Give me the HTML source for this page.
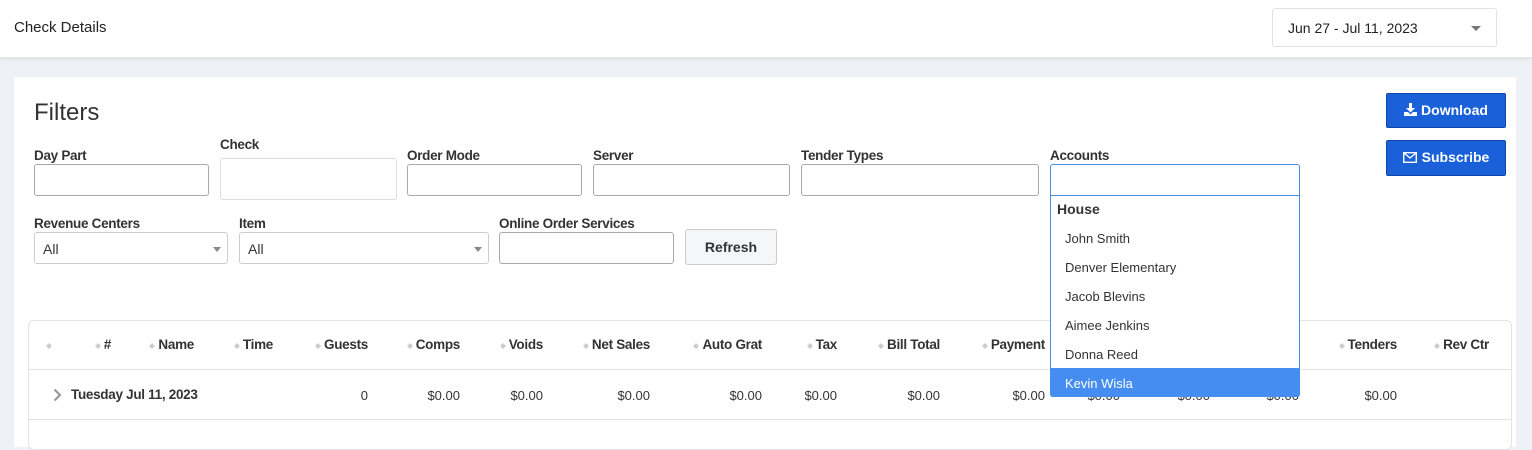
<!DOCTYPE html>
<html><head><style>
*{box-sizing:border-box;margin:0;padding:0}
body{width:1532px;height:437px;overflow:hidden;background:#eef1f5;font-family:"Liberation Sans",sans-serif;color:#222;position:relative}
.a{position:absolute}
.hdr{left:0;top:0;width:1532px;height:57px;background:#fff;box-shadow:0 2px 4px rgba(0,0,0,.08)}
.card{left:14px;top:77px;width:1502px;height:370px;background:#fff}
.lbl{font-size:13.5px;font-weight:bold;color:#333;letter-spacing:-.3px}
.inp{border:1px solid #aaa;border-radius:3px;background:#fff;height:32px}
.sel{border:1px solid #ccc;border-radius:3px;height:32px;font-size:14px;padding:8px 8px;color:#333}
.sel:after{content:"";position:absolute;right:6px;top:14px;border:4px solid transparent;border-top:5px solid #888}
.btn{background:#1a60d8;border:1px solid #1247a8;border-radius:2px;color:#fff;font-weight:bold;font-size:14px;text-align:center;line-height:33px}
.th{font-size:13.5px;font-weight:bold;color:#333;top:337px;text-align:right;letter-spacing:-.3px}
.td{font-size:13px;color:#333;top:388px;text-align:right}
.si{display:inline-block;width:6px;height:8px;margin-right:3px;vertical-align:0;position:relative}
.si:before{content:"";position:absolute;left:0;top:-1px;border:3px solid transparent;border-bottom:3px solid #ccc}
.si:after{content:"";position:absolute;left:0;top:5px;border:3px solid transparent;border-top:3px solid #ccc}
.it{left:1065px;font-size:13px;color:#333}
</style></head><body>
<div class="a hdr"></div>
<div class="a" style="left:14px;top:19px;font-size:15px;color:#222">Check Details</div>
<div class="a" style="left:1272px;top:8px;width:225px;height:39px;border:1px solid #e2e2e2;border-radius:3px;background:#fff"></div>
<div class="a" style="left:1288px;top:20px;font-size:14px;color:#222">Jun 27 - Jul 11, 2023</div>
<div class="a" style="left:1471px;top:26px;border:5px solid transparent;border-top:5px solid #777"></div>

<div class="a card"></div>
<div class="a" style="left:34px;top:99px;font-size:24px;color:#333">Filters</div>

<div class="a lbl" style="left:34px;top:148px">Day Part</div>
<div class="a inp" style="left:34px;top:164px;width:175px"></div>
<div class="a lbl" style="left:220px;top:137px">Check</div>
<div class="a inp" style="left:220px;top:158px;width:177px;height:42px;border-color:#ddd"></div>
<div class="a lbl" style="left:407px;top:148px">Order Mode</div>
<div class="a inp" style="left:407px;top:164px;width:175px"></div>
<div class="a lbl" style="left:593px;top:148px">Server</div>
<div class="a inp" style="left:593px;top:164px;width:197px"></div>
<div class="a lbl" style="left:801px;top:148px">Tender Types</div>
<div class="a inp" style="left:801px;top:164px;width:238px"></div>
<div class="a lbl" style="left:1050px;top:148px">Accounts</div>

<div class="a lbl" style="left:34px;top:216px">Revenue Centers</div>
<div class="a sel" style="left:34px;top:232px;width:194px">All</div>
<div class="a lbl" style="left:239px;top:216px">Item</div>
<div class="a sel" style="left:239px;top:232px;width:250px">All</div>
<div class="a lbl" style="left:499px;top:216px">Online Order Services</div>
<div class="a inp" style="left:499px;top:232px;width:175px"></div>
<div class="a" style="left:685px;top:229px;width:92px;height:36px;border:1px solid #ccc;border-radius:3px;background:#f4f6f8;font-size:14px;font-weight:bold;text-align:center;line-height:34px;color:#333">Refresh</div>

<div class="a btn" style="left:1386px;top:93px;width:120px;height:35px"><svg width="13" height="13" viewBox="0 0 13 13" style="vertical-align:-1px;margin-right:4px"><path d="M5 0h3v5h3l-4.5 4.5L2 5h3z M0 9h4l2.5 2.5L9 9h4v4H0z" fill="#fff"/></svg>Download</div>
<div class="a btn" style="left:1386px;top:140px;width:120px;height:36px"><svg width="14" height="11" viewBox="0 0 14 11" style="vertical-align:-1px;margin-right:5px"><rect x=".7" y=".7" width="12.6" height="9.6" fill="none" stroke="#fff" stroke-width="1.4"/><path d="M1 1l6 5 6-5" fill="none" stroke="#fff" stroke-width="1.4"/></svg>Subscribe</div>

<div class="a" style="left:28px;top:320px;width:1484px;height:130px;border:1px solid #e4e4e4;border-radius:6px;background:#fff"></div>
<div class="a" style="left:29px;top:369px;width:1482px;height:1px;background:#e4e4e4"></div>
<div class="a" style="left:29px;top:419px;width:1482px;height:1px;background:#e4e4e4"></div>
<div class="a th" style="left:46px"><span class="si"></span></div>
<div class="a th" style="right:1421px"><span class="si"></span>#</div>
<div class="a th" style="right:1338px"><span class="si"></span>Name</div>
<div class="a th" style="right:1259px"><span class="si"></span>Time</div>
<div class="a th" style="right:1164px"><span class="si"></span>Guests</div>
<div class="a th" style="right:1072px"><span class="si"></span>Comps</div>
<div class="a th" style="right:989px"><span class="si"></span>Voids</div>
<div class="a th" style="right:882px"><span class="si"></span>Net Sales</div>
<div class="a th" style="right:770px"><span class="si"></span>Auto Grat</div>
<div class="a th" style="right:695px"><span class="si"></span>Tax</div>
<div class="a th" style="right:592px"><span class="si"></span>Bill Total</div>
<div class="a th" style="right:487px"><span class="si"></span>Payment</div>
<div class="a th" style="right:135px"><span class="si"></span>Tenders</div>
<div class="a th" style="right:43px"><span class="si"></span>Rev Ctr</div>

<svg class="a" style="left:53px;top:388px" width="9" height="14" viewBox="0 0 9 14"><path d="M1.5 1.5l5.5 5.5-5.5 5.5" fill="none" stroke="#999" stroke-width="2.2"/></svg>
<div class="a" style="left:71px;top:387px;font-size:13.5px;font-weight:bold;color:#333;letter-spacing:-.3px">Tuesday Jul 11, 2023</div>
<div class="a td" style="right:1164px">0</div>
<div class="a td" style="right:1072px">$0.00</div>
<div class="a td" style="right:989px">$0.00</div>
<div class="a td" style="right:882px">$0.00</div>
<div class="a td" style="right:770px">$0.00</div>
<div class="a td" style="right:695px">$0.00</div>
<div class="a td" style="right:592px">$0.00</div>
<div class="a td" style="right:487px">$0.00</div>
<div class="a td" style="right:412px">$0.00</div>
<div class="a td" style="right:322px">$0.00</div>
<div class="a td" style="right:233px">$0.00</div>
<div class="a td" style="right:135px">$0.00</div>

<div class="a" style="left:1050px;top:164px;width:250px;height:233px;border:1px solid #4a8be8;border-radius:3px;background:#fff"></div>
<div class="a" style="left:1050px;top:195px;width:250px;height:1px;background:#4a8be8"></div>
<div class="a" style="left:1057px;top:201px;font-size:14px;font-weight:bold;color:#333">House</div>
<div class="a it" style="top:231px">John Smith</div>
<div class="a it" style="top:260px">Denver Elementary</div>
<div class="a it" style="top:289px">Jacob Blevins</div>
<div class="a it" style="top:318px">Aimee Jenkins</div>
<div class="a it" style="top:347px">Donna Reed</div>
<div class="a" style="left:1050px;top:368px;width:250px;height:29px;background:#458df0;border-radius:0 0 3px 3px"></div>
<div class="a it" style="top:376px;color:#fff">Kevin Wisla</div>
</body></html>
